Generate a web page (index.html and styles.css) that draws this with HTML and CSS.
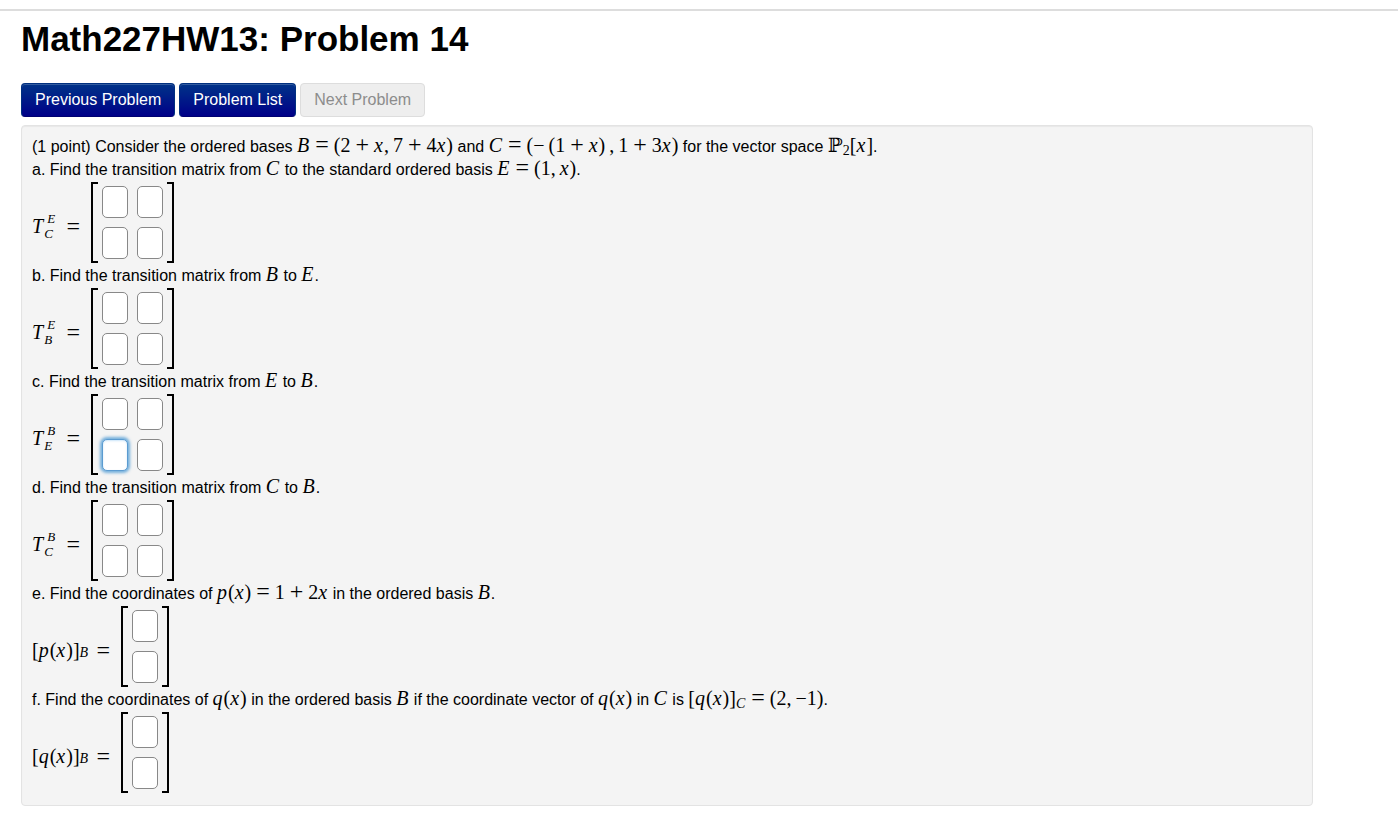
FILE: index.html
```
<!DOCTYPE html>
<html lang="en">
<head>
    <meta charset="UTF-8">
    <meta name="viewport" content="width=device-width, initial-scale=1.0">
    <title>Math227HW13: Problem 14</title>
    <link rel="stylesheet" href="styles.css">
</head>
<body>
    <main class="page">
        <h1>Math227HW13: Problem 14</h1>

        <nav class="problem-nav">
            <a class="btn btn-primary" href="#prev">Previous Problem</a>
            <a class="btn btn-primary" href="#list">Problem List</a>
            <button class="btn" type="button" disabled>Next Problem</button>
        </nav>

        <form class="problem">
            <p>(1 point) Consider the ordered bases <span class="math"><i>B</i><b class="rel">=</b>(2<b class="op">+</b><i>x</i>,<b class="sp"></b>7<b class="op">+</b>4<i>x</i>)</span> and <span class="math"><i>C</i><b class="rel">=</b>(−<b class="sp"></b>(1<b class="op">+</b><i>x</i>)<b class="sp"></b>,<b class="sp"></b>1<b class="op">+</b>3<i>x</i>)</span> for the vector space <span class="math">ℙ<sub>2</sub>[<i>x</i>]</span>.</p>

            <p>a. Find the transition matrix from <span class="math"><i>C</i></span> to the standard ordered basis <span class="math"><i>E</i><b class="rel">=</b>(1,<b class="sp"></b><i>x</i>)</span>.</p>
            <div class="answer">
                <span class="math lhs"><i>T</i><span class="scripts"><i>E</i><i>C</i></span><b class="rel">=</b></span>
                <div class="matrix">
                    <input type="text" aria-label="a, row 1 column 1">
                    <input type="text" aria-label="a, row 1 column 2">
                    <input type="text" aria-label="a, row 2 column 1">
                    <input type="text" aria-label="a, row 2 column 2">
                </div>
            </div>

            <p>b. Find the transition matrix from <span class="math"><i>B</i></span> to <span class="math"><i>E</i></span>.</p>
            <div class="answer">
                <span class="math lhs"><i>T</i><span class="scripts"><i>E</i><i>B</i></span><b class="rel">=</b></span>
                <div class="matrix">
                    <input type="text" aria-label="b, row 1 column 1">
                    <input type="text" aria-label="b, row 1 column 2">
                    <input type="text" aria-label="b, row 2 column 1">
                    <input type="text" aria-label="b, row 2 column 2">
                </div>
            </div>

            <p>c. Find the transition matrix from <span class="math"><i>E</i></span> to <span class="math"><i>B</i></span>.</p>
            <div class="answer">
                <span class="math lhs"><i>T</i><span class="scripts"><i>B</i><i>E</i></span><b class="rel">=</b></span>
                <div class="matrix">
                    <input type="text" aria-label="c, row 1 column 1">
                    <input type="text" aria-label="c, row 1 column 2">
                    <input type="text" class="active" aria-label="c, row 2 column 1">
                    <input type="text" aria-label="c, row 2 column 2">
                </div>
            </div>

            <p>d. Find the transition matrix from <span class="math"><i>C</i></span> to <span class="math"><i>B</i></span>.</p>
            <div class="answer">
                <span class="math lhs"><i>T</i><span class="scripts"><i>B</i><i>C</i></span><b class="rel">=</b></span>
                <div class="matrix">
                    <input type="text" aria-label="d, row 1 column 1">
                    <input type="text" aria-label="d, row 1 column 2">
                    <input type="text" aria-label="d, row 2 column 1">
                    <input type="text" aria-label="d, row 2 column 2">
                </div>
            </div>

            <p>e. Find the coordinates of <span class="math"><i>p</i>(<i>x</i>)<b class="rel">=</b>1<b class="op">+</b>2<i>x</i></span> in the ordered basis <span class="math"><i>B</i></span>.</p>
            <div class="answer">
                <span class="math lhs lhs-wide">[<i>p</i>(<i>x</i>)]<sub><i>B</i></sub><b class="rel">=</b></span>
                <div class="matrix vector">
                    <input type="text" aria-label="e, row 1">
                    <input type="text" aria-label="e, row 2">
                </div>
            </div>

            <p>f. Find the coordinates of <span class="math"><i>q</i>(<i>x</i>)</span> in the ordered basis <span class="math"><i>B</i></span> if the coordinate vector of <span class="math"><i>q</i>(<i>x</i>)</span> in <span class="math"><i>C</i></span> is <span class="math">[<i>q</i>(<i>x</i>)]<sub><i>C</i></sub><b class="rel">=</b>(2,<b class="sp"></b>−1)</span>.</p>
            <div class="answer">
                <span class="math lhs lhs-wide">[<i>q</i>(<i>x</i>)]<sub><i>B</i></sub><b class="rel">=</b></span>
                <div class="matrix vector">
                    <input type="text" aria-label="f, row 1">
                    <input type="text" aria-label="f, row 2">
                </div>
            </div>
        </form>
    </main>
</body>
</html>
```
FILE: styles.css
```
body {
    margin: 9px 0 0;
    border-top: 2px solid #ddd;
    background-color: white;
    color: black;
    font-family: "Liberation Sans", Arial, sans-serif;
    font-size: 16px;
    line-height: 23px;
}
.page {
    padding: 8px 85px 20px 21px;
}
h1 {
    margin: 0 0 24px;
    font-size: 35px;
    line-height: 40px;
}
.problem-nav {
    display: flex;
    gap: 4px;
    margin-bottom: 8px;
}
.btn {
    box-sizing: border-box;
    height: 34px;
    padding: 0 13px;
    border: 1px solid #ddd;
    border-radius: 4px;
    background-color: #eee;
    color: #8c8c8c;
    font-family: inherit;
    font-size: 16px;
    line-height: 32px;
    text-decoration: none;
}
.btn-primary {
    border-color: #003080 #003080 #000070;
    background: linear-gradient(#003388, #000088);
    box-shadow: inset 0 1px 0 rgba(255, 255, 255, 0.2);
    color: white;
}
.problem {
    padding: 9px 10px 11px;
    border: 1px solid #e3e3e3;
    border-radius: 4px;
    background-color: #f4f4f4;
    box-shadow: inset 0 1px 1px rgba(0, 0, 0, 0.05);
}
.problem p {
    margin: 0;
}

/* math */
.math {
    font-family: "Liberation Serif", "DejaVu Serif", serif;
    font-size: 20px;
    line-height: 1;
    white-space: nowrap;
}
.math i {
    padding-right: 1px;
}
.math b {
    font-weight: normal;
    line-height: 0;
}
.math .rel {
    margin: 0 5px;
    font-size: 24px;
}
.math .op {
    margin: 0 5px;
    font-size: 24px;
}
.math .sp {
    margin-right: 4px;
}
.math sub {
    font-size: 14px;
    line-height: 0;
    vertical-align: -3px;
}
.answer {
    display: flex;
    align-items: center;
    height: 83px;
}
.lhs {
    display: flex;
    align-items: center;
    box-sizing: border-box;
    min-width: 59px;
    padding-top: 6px;
}
.lhs-wide {
    min-width: 89px;
}
.lhs sub {
    align-self: flex-end;
    line-height: 14px;
}
.lhs .rel {
    margin: 0 11px 0 auto;
}
.scripts {
    display: flex;
    flex-direction: column;
    font-size: 13px;
    line-height: 15px;
}
.scripts i:first-child {
    padding-left: 3px;
}
.matrix {
    display: grid;
    grid-template-columns: 26px 26px;
    gap: 9px;
    position: relative;
    padding: 4px 11px;
}
.vector {
    grid-template-columns: 26px;
}

/* square brackets on both sides of a matrix */
.matrix::before,
.matrix::after {
    content: "";
    position: absolute;
    top: 0;
    bottom: 0;
    width: 5px;
    border: 2px solid black;
}
.matrix::before {
    left: 0;
    border-right: none;
}
.matrix::after {
    right: 0;
    border-left: none;
}
.matrix input {
    box-sizing: border-box;
    width: 26px;
    height: 32px;
    padding: 4px;
    border: 1px solid #888;
    border-radius: 5px;
    background-color: white;
    font-size: 16px;
}
.matrix input:focus,
.matrix input.active {
    border-color: #5b9bd0;
    outline: none;
    box-shadow: inset 0 1px 2px rgba(82, 168, 236, 0.3), 0 0 3px 2px rgba(60, 145, 210, 0.7);
}
```
